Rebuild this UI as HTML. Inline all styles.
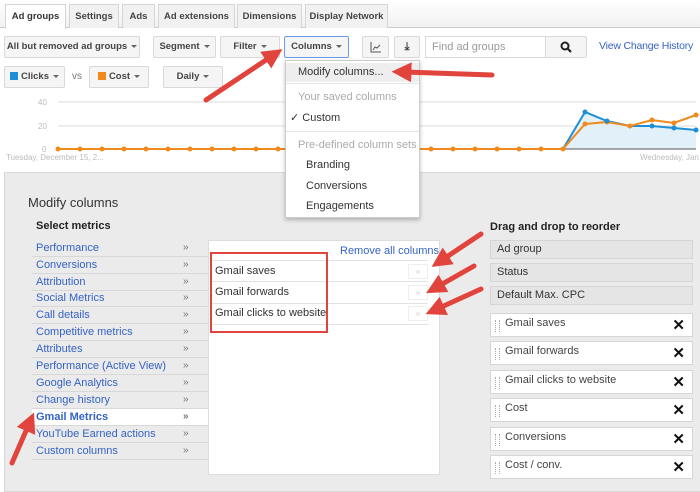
<!DOCTYPE html>
<html><head><meta charset="utf-8"><style>
*{box-sizing:border-box;margin:0;padding:0;white-space:nowrap}
body{width:700px;height:482px;overflow:hidden;background:#fff;font-family:"Liberation Sans",Arial,sans-serif;font-size:11px;color:#222;position:relative}
.a{position:absolute}
.tabbar{left:0;top:0;width:700px;height:28px;background:linear-gradient(#fff,#f1f1f1);border-bottom:1px solid #ccc}
.tab{position:absolute;top:4px;height:24px;background:#f1f1f1;border:1px solid #d6d6d6;border-bottom:none;font-weight:bold;font-size:9.5px;color:#444;text-align:center;line-height:23px;overflow:hidden}
.tab.on{background:#fff;height:25px;color:#333}
.btn{position:absolute;height:22px;border:1px solid #d9d9d9;background:#f5f5f5;border-radius:2px;font-weight:bold;font-size:9.5px;color:#444;text-align:center;line-height:20px;overflow:hidden}
.car{display:inline-block;border-left:3px solid transparent;border-right:3px solid transparent;border-top:3px solid #666;vertical-align:middle;margin-left:4px}
.dd{left:285px;top:60px;width:135px;height:158px;background:#fff;border:1px solid #ccc;box-shadow:0 2px 4px rgba(0,0,0,.25);font-size:11px;color:#333}
.dd div{position:absolute;left:0;width:133px;padding-left:12px;height:19px;line-height:19px}
.panel{left:4px;top:172px;width:700px;height:320px;background:#ebebeb;border:1px solid #d8d8d8}
.li{position:absolute;left:32px;width:176px;height:17px;border-bottom:1px solid #d8d8d8;color:#3563c4;font-size:11px;line-height:16px;padding-left:4px}
.li span{position:absolute;left:151px;color:#777;font-size:10px}
.mr{position:absolute;left:212px;width:216px;height:22px;border-bottom:1px solid #e2e2e2;font-size:11px;line-height:20px;padding-left:3px;color:#333}
.mr i{position:absolute;right:0;top:3px;width:20px;height:15px;border:1px solid #eee;font-style:normal;color:#ccc;font-size:8px;text-align:center;line-height:13px}
.gb{position:absolute;left:490px;width:203px;height:19px;background:#e5e5e5;border:1px solid #d5d5d5;font-size:11px;line-height:17px;padding-left:6px;color:#333}
.wb{position:absolute;left:490px;width:203px;height:24px;background:#fff;border:1px solid #d5d5d5;font-size:11px;line-height:18px;padding-left:14px;color:#444}
.wb:before{content:"";position:absolute;left:4px;top:6px;width:3px;height:12px;border-left:1px dotted #aaa;border-right:1px dotted #aaa}
.wb b{position:absolute;right:7px;top:3px;font-size:15px;color:#111;font-weight:bold}
</style></head><body>
<div class="a tabbar"></div>
<div class="tab on" style="left:5px;width:61px">Ad groups</div>
<div class="tab" style="left:69px;width:50px">Settings</div>
<div class="tab" style="left:122px;width:33px">Ads</div>
<div class="tab" style="left:158px;width:77px">Ad extensions</div>
<div class="tab" style="left:237px;width:65px">Dimensions</div>
<div class="tab" style="left:305px;width:83px">Display Network</div>

<div class="btn" style="left:4px;top:36px;width:136px">All but removed ad groups<span class="car"></span></div>
<div class="btn" style="left:153px;top:36px;width:63px">Segment<span class="car"></span></div>
<div class="btn" style="left:220px;top:36px;width:60px">Filter<span class="car"></span></div>
<div class="btn" style="left:284px;top:36px;width:65px;border-color:#6b9bea">Columns<span class="car"></span></div>
<div class="btn" style="left:362px;top:36px;width:27px"><svg width="12" height="11" style="margin-top:5px"><path d="M1 0V10H11M3 8L5 5L7 6L10 3" stroke="#555" fill="none"/></svg></div>
<div class="btn" style="left:394px;top:36px;width:26px;font-size:11px">⤓</div>
<div class="a" style="left:425px;top:36px;width:121px;height:22px;border:1px solid #d9d9d9;color:#999;font-size:11px;padding:4px 6px">Find ad groups</div>
<div class="btn" style="left:545px;top:36px;width:42px"><svg width="12" height="12" style="margin-top:4px"><circle cx="5" cy="5" r="3.5" stroke="#222" stroke-width="2" fill="none"/><path d="M7.5 7.5L11 11" stroke="#222" stroke-width="2.2"/></svg></div>
<div class="a" style="left:599px;top:40px;color:#3563c4;font-size:10.5px;letter-spacing:-0.2px">View Change History</div>

<div class="btn" style="left:4px;top:66px;width:61px"><span style="display:inline-block;width:8px;height:8px;background:#1e8fd6;margin-right:3px;vertical-align:-1px"></span>Clicks<span class="car"></span></div>
<div class="a" style="left:72px;top:71px;color:#777;font-size:10px">vs</div>
<div class="btn" style="left:89px;top:66px;width:60px"><span style="display:inline-block;width:8px;height:8px;background:#f08a1c;margin-right:3px;vertical-align:-1px"></span>Cost<span class="car"></span></div>
<div class="btn" style="left:163px;top:66px;width:60px">Daily<span class="car"></span></div>

<svg class="a" style="left:0;top:90px" width="700" height="82">
<g font-size="8" fill="#bbb" font-family="Liberation Sans,Arial,sans-serif"><text x="38" y="15">40</text><text x="38" y="39">20</text><text x="42" y="62">0</text>
<text x="6" y="70">Tuesday, December 15, 2...</text><text x="640" y="70">Wednesday, Jan</text></g>
<path d="M58 12H696M58 36H696" stroke="#ddd"/>
<path d="M563 59L585 22L607 31L630 36L652 36L674 38L696 40V59Z" fill="#e2f0fa"/>
<path d="M58 59H696" stroke="#555"/>
<path d="M563 59L585 22L607 31L630 36L652 36L674 38L696 40" stroke="#1e8fd6" stroke-width="2" fill="none"/>
<path d="M58 59H563L585 34L607 32L630 36L652 30L674 33L696 25" stroke="#f08a1c" stroke-width="2" fill="none"/>
<g fill="#f08a1c">
<circle cx="58" cy="59" r="2.5"/><circle cx="80" cy="59" r="2.5"/><circle cx="102" cy="59" r="2.5"/><circle cx="124" cy="59" r="2.5"/><circle cx="146" cy="59" r="2.5"/><circle cx="168" cy="59" r="2.5"/><circle cx="190" cy="59" r="2.5"/><circle cx="212" cy="59" r="2.5"/><circle cx="234" cy="59" r="2.5"/><circle cx="256" cy="59" r="2.5"/><circle cx="278" cy="59" r="2.5"/><circle cx="431" cy="59" r="2.5"/><circle cx="453" cy="59" r="2.5"/><circle cx="475" cy="59" r="2.5"/><circle cx="497" cy="59" r="2.5"/><circle cx="519" cy="59" r="2.5"/><circle cx="541" cy="59" r="2.5"/><circle cx="563" cy="59" r="2.5"/>
<circle cx="585" cy="34" r="2.5"/><circle cx="607" cy="32" r="2.5"/><circle cx="630" cy="36" r="2.5"/><circle cx="652" cy="30" r="2.5"/><circle cx="674" cy="33" r="2.5"/><circle cx="696" cy="25" r="2.5"/></g>
<g fill="#1e8fd6"><circle cx="585" cy="22" r="2.5"/><circle cx="607" cy="31" r="2.5"/><circle cx="652" cy="36" r="2.5"/><circle cx="674" cy="38" r="2.5"/><circle cx="696" cy="40" r="2.5"/></g>
</svg>

<div class="a panel"></div>
<div class="a" style="left:28px;top:195px;font-size:13px;color:#333">Modify columns</div>
<div class="a" style="left:36px;top:220px;font-size:11px;font-weight:bold;color:#222">Select metrics</div>
<div class="li" style="top:240px">Performance<span>»</span></div>
<div class="li" style="top:257px">Conversions<span>»</span></div>
<div class="li" style="top:274px">Attribution<span>»</span></div>
<div class="li" style="top:290px">Social Metrics<span>»</span></div>
<div class="li" style="top:307px">Call details<span>»</span></div>
<div class="li" style="top:324px">Competitive metrics<span>»</span></div>
<div class="li" style="top:341px">Attributes<span>»</span></div>
<div class="li" style="top:358px">Performance (Active View)<span>»</span></div>
<div class="li" style="top:375px">Google Analytics<span>»</span></div>
<div class="li" style="top:392px">Change history<span>»</span></div>
<div class="li" style="top:409px;background:#fff;font-weight:bold">Gmail Metrics<span>»</span></div>
<div class="li" style="top:426px">YouTube Earned actions<span>»</span></div>
<div class="li" style="top:443px">Custom columns<span>»</span></div>

<div class="a" style="left:208px;top:240px;width:232px;height:235px;background:#fff;border:1px solid #ddd"></div>
<div class="a" style="left:340px;top:245px;color:#3563c4;font-size:11px">Remove all columns</div>
<div class="mr" style="top:260px;border-top:1px solid #e2e2e2">Gmail saves<i>»</i></div>
<div class="mr" style="top:282px">Gmail forwards<i>»</i></div>
<div class="mr" style="top:303px">Gmail clicks to website<i>»</i></div>
<div class="a" style="left:210px;top:252px;width:118px;height:81px;border:2px solid #e0443c"></div>

<div class="a" style="left:490px;top:221px;font-size:11px;font-weight:bold;color:#222">Drag and drop to reorder</div>
<div class="gb" style="top:240px">Ad group</div>
<div class="gb" style="top:263px">Status</div>
<div class="gb" style="top:286px">Default Max. CPC</div>
<div class="wb" style="top:313px">Gmail saves<b>✕</b></div>
<div class="wb" style="top:341px">Gmail forwards<b>✕</b></div>
<div class="wb" style="top:370px">Gmail clicks to website<b>✕</b></div>
<div class="wb" style="top:398px">Cost<b>✕</b></div>
<div class="wb" style="top:427px">Conversions<b>✕</b></div>
<div class="wb" style="top:455px">Cost / conv.<b>✕</b></div>

<div class="a dd">
<div style="top:2px;background:#eee">Modify columns...</div>
<div style="top:22px;height:1px;padding:0;background:#e5e5e5"></div>
<div style="top:27px;color:#aaa">Your saved columns</div>
<div style="top:48px;padding-left:4px">✓ Custom</div>
<div style="top:70px;height:1px;padding:0;background:#e5e5e5"></div>
<div style="top:75px;color:#aaa">Pre-defined column sets</div>
<div style="top:95px;padding-left:20px">Branding</div>
<div style="top:116px;padding-left:20px">Conversions</div>
<div style="top:136px;padding-left:20px">Engagements</div>
</div>

<svg class="a" style="left:0;top:0" width="700" height="482">
<defs><marker id="h" markerWidth="4" markerHeight="4" refX="1.5" refY="2" orient="auto" markerUnits="strokeWidth"><path d="M0 0L4 2L0 4Z" fill="#e0443c"/></marker></defs>
<g stroke="#e0443c" stroke-width="5" stroke-linecap="round" fill="none" marker-end="url(#h)">
<path d="M206 100L272 56"/>
<path d="M492 75L404 72"/>
<path d="M481 234L442 260"/>
<path d="M474 266L437 287"/>
<path d="M481 289L437 309"/>
<path d="M12 463L29 424"/>
</g></svg>
</body></html>
